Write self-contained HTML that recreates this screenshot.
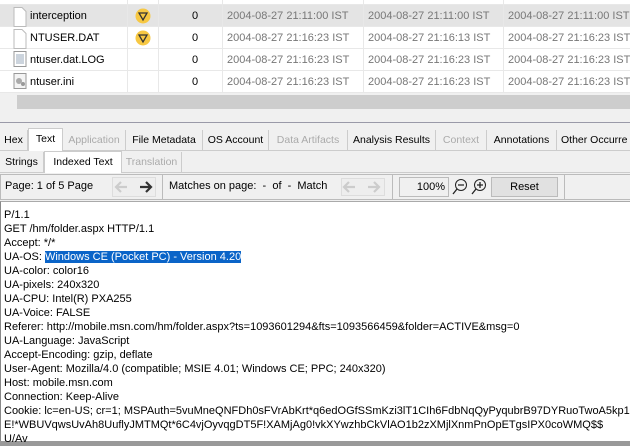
<!DOCTYPE html>
<html><head><style>
*{margin:0;padding:0;box-sizing:border-box}
body{width:630px;height:446px;overflow:hidden;background:#f0f0f0;font-family:"Liberation Sans",sans-serif;font-size:11px;color:#000;position:relative}
.abs{position:absolute;white-space:nowrap}
.row{position:absolute;left:0;width:630px;height:22px;background:#fff;border-bottom:1px solid #e8e8e8}
.d{color:#777;padding-left:6px;overflow:hidden}
.tab{position:absolute;top:130px;height:20px;line-height:20px;text-align:center;border-right:1px solid #ccc;white-space:nowrap;overflow:hidden;font-size:10.5px}
.dis{color:#aaa}
.txt{position:absolute;left:4px;white-space:pre;line-height:14px;font-size:11px}
</style></head><body>
<!-- table -->
<div class="row" style="top:-17px"></div>
<div class="row" style="top:5px;background:#e4e4e4"></div>
<div class="row" style="top:27px"></div>
<div class="row" style="top:49px"></div>
<div class="row" style="top:71px"></div>
<div class="abs" style="left:0;top:0;width:630px;height:93px">
 <div class="abs" style="left:127px;top:0;width:1px;height:93px;background:#e8e8e8"></div>
 <div class="abs" style="left:158px;top:0;width:1px;height:93px;background:#e8e8e8"></div>
 <div class="abs" style="left:222px;top:0;width:1px;height:93px;background:#e8e8e8"></div>
 <div class="abs" style="left:363px;top:0;width:1px;height:93px;background:#e8e8e8"></div>
 <div class="abs" style="left:503px;top:0;width:1px;height:93px;background:#e8e8e8"></div>
</div>
<!-- icons -->
<svg class="abs" style="left:12px;top:7px" width="16" height="84">
 <path d="M2 .5h8l4 4v15H2z" fill="#fff" stroke="#bbb"/>
 <path d="M2 22.5h8l4 4v15H2z" fill="#fff" stroke="#bbb"/>
 <path d="M2 44.5h12v15H2z" fill="#fff" stroke="#999"/>
 <path d="M4 48h8M4 50h8M4 52h8M4 54h8M4 56h8" stroke="#9ab"/>
 <path d="M2 66.5h12v15H2z" fill="#f4f4f4" stroke="#999"/>
 <circle cx="7" cy="74" r="3" fill="#aaa"/><circle cx="11" cy="77" r="2" fill="#999"/>
</svg>
<svg class="abs" style="left:135px;top:8px" width="16" height="40">
 <circle cx="8" cy="8" r="7.5" fill="#f7c843"/><path d="M4 5h8l-4 7z" fill="none" stroke="#333" stroke-width="1.3"/>
 <circle cx="8" cy="30" r="7.5" fill="#f7c843"/><path d="M4 27h8l-4 7z" fill="none" stroke="#333" stroke-width="1.3"/>
</svg>
<div class="abs" style="top:5px;left:0;width:630px">
 <div class="abs" style="left:30px;top:0;line-height:22px">interception</div>
 <div class="abs" style="left:30px;top:22px;line-height:22px">NTUSER.DAT</div>
 <div class="abs" style="left:30px;top:44px;line-height:22px">ntuser.dat.LOG</div>
 <div class="abs" style="left:30px;top:66px;line-height:22px">ntuser.ini</div>
</div>
<div class="abs" style="left:192px;top:5px;line-height:22px">0<br>0<br>0<br>0</div>
<div class="abs d" style="left:221px;top:5px;width:141px;line-height:22px">2004-08-27 21:11:00 IST<br>2004-08-27 21:16:23 IST<br>2004-08-27 21:16:23 IST<br>2004-08-27 21:16:23 IST</div>
<div class="abs d" style="left:362px;top:5px;width:140px;line-height:22px">2004-08-27 21:11:00 IST<br>2004-08-27 21:16:13 IST<br>2004-08-27 21:16:23 IST<br>2004-08-27 21:16:23 IST</div>
<div class="abs d" style="left:502px;top:5px;width:128px;line-height:22px">2004-08-27 21:11:00 IST<br>2004-08-27 21:16:23 IST<br>2004-08-27 21:16:23 IST<br>2004-08-27 21:16:23 IST</div>
<!-- scrollbar -->
<div class="abs" style="left:0;top:94px;width:630px;height:15px;background:#f0f0f0"></div>
<div class="abs" style="left:17px;top:95px;width:613px;height:14px;background:#cdcdcd"></div>
<div class="abs" style="left:0;top:122px;width:630px;height:1px;background:#9a9aa8"></div>
<!-- tabs -->
<div class="abs" style="left:0;top:150px;width:630px;height:1px;background:#ccc"></div>
<div class="tab" style="left:0;width:28px">Hex</div>
<div class="tab" style="left:28px;width:35px;top:128px;height:23px;line-height:21px;background:#fff;border:1px solid #ccc;border-bottom:none">Text</div>
<div class="tab dis" style="left:63px;width:63px">Application</div>
<div class="tab" style="left:126px;width:77px">File Metadata</div>
<div class="tab" style="left:203px;width:66px">OS Account</div>
<div class="tab dis" style="left:269px;width:79px">Data Artifacts</div>
<div class="tab" style="left:348px;width:88px">Analysis Results</div>
<div class="tab dis" style="left:436px;width:51px">Context</div>
<div class="tab" style="left:487px;width:70px">Annotations</div>
<div class="tab" style="left:557px;width:73px;border:none;text-align:left;padding-left:4px">Other Occurre</div>
<div class="abs" style="left:0;top:172px;width:630px;height:1px;background:#ccc"></div>
<div class="tab" style="top:152px;left:0;width:44px">Strings</div>
<div class="tab" style="top:151px;height:22px;left:44px;width:78px;background:#fff;border:1px solid #ccc;border-bottom:none">Indexed Text</div>
<div class="tab dis" style="top:152px;left:122px;width:60px">Translation</div>
<!-- toolbar -->
<div class="abs" style="left:0;top:174px;width:630px;height:26px;border:1px solid #bbb;border-right:none"></div>
<div class="abs" style="left:5px;top:180px">Page: 1 of 5 Page</div>
<div class="abs" style="left:112px;top:177px;width:44px;height:20px;border:1px solid #ddd;background:#eee"></div>
<svg class="abs" style="left:113px;top:178px" width="44" height="18"><path d="M14 9H4M8 4 3 9l5 5" stroke="#ccc" stroke-width="2.2" fill="none"/><path d="M27 9h10M33 4l5 5-5 5" stroke="#333" stroke-width="2.2" fill="none"/></svg>
<div class="abs" style="left:162px;top:174px;width:1px;height:26px;background:#bbb"></div>
<div class="abs" style="left:169px;top:180px">Matches on page:&nbsp; - &nbsp;of&nbsp; - &nbsp;Match</div>
<svg class="abs" style="left:341px;top:178px" width="44" height="18"><rect x=".5" y=".5" width="43" height="17" fill="#eee" stroke="#ddd"/><path d="M14 9H4M8 4 3 9l5 5M27 9h10M33 4l5 5-5 5" stroke="#ccc" stroke-width="2.2" fill="none"/></svg>
<div class="abs" style="left:392px;top:174px;width:1px;height:26px;background:#bbb"></div>
<div class="abs" style="left:399px;top:177px;width:50px;height:20px;border:1px solid #bbb;text-align:right;padding-right:3px;line-height:18px">100%</div>
<svg class="abs" style="left:450px;top:177px" width="40" height="20"><circle cx="11" cy="8" r="5.5" fill="none" stroke="#222"/><path d="M8 8h6M7 12l-4 5" stroke="#222" stroke-width="1.3"/><circle cx="30" cy="8" r="5.5" fill="none" stroke="#222"/><path d="M27 8h6M30 5v6M26 12l-4 5" stroke="#222" stroke-width="1.3"/></svg>
<div class="abs" style="left:491px;top:177px;width:67px;height:20px;border:1px solid #bbb;background:#e1e1e1;text-align:center;line-height:18px">Reset</div>
<div class="abs" style="left:564px;top:174px;width:1px;height:26px;background:#bbb"></div>
<!-- text area -->
<div class="abs" style="left:0;top:201px;width:630px;height:240px;background:#fff;border-left:1px solid #888;border-top:1px solid #aaa"></div>
<div class="abs" style="left:0;top:441px;width:630px;height:5px;background:#999"></div>
<div class="txt" style="top:208px">P/1.1
GET /hm/folder.aspx HTTP/1.1
Accept: */*
UA-OS: <span style="background:#0a64c8;color:#fff">Windows CE (Pocket PC) - Version 4.20</span>
UA-color: color16
UA-pixels: 240x320
UA-CPU: Intel(R) PXA255
UA-Voice: FALSE
Referer: http://mobile.msn.com/hm/folder.aspx?ts=1093601294&amp;fts=1093566459&amp;folder=ACTIVE&amp;msg=0
UA-Language: JavaScript
Accept-Encoding: gzip, deflate
User-Agent: Mozilla/4.0 (compatible; MSIE 4.01; Windows CE; PPC; 240x320)
Host: mobile.msn.com
Connection: Keep-Alive
Cookie: lc=en-US; cr=1; MSPAuth=5vuMneQNFDh0sFVrAbKrt*q6edOGfSSmKzi3lT1CIh6FdbNqQyPyqubrB97DYRuoTwoA5kp1iTd3e
E!*WBUVqwsUvAh8UuflyJMTMQt*6C4vjOyvqgDT5F!XAMjAg0!vkXYwzhbCkVlAO1b2zXMjlXnmPnOpETgsIPX0coWMQ$$
U/Av</div>
</body></html>
